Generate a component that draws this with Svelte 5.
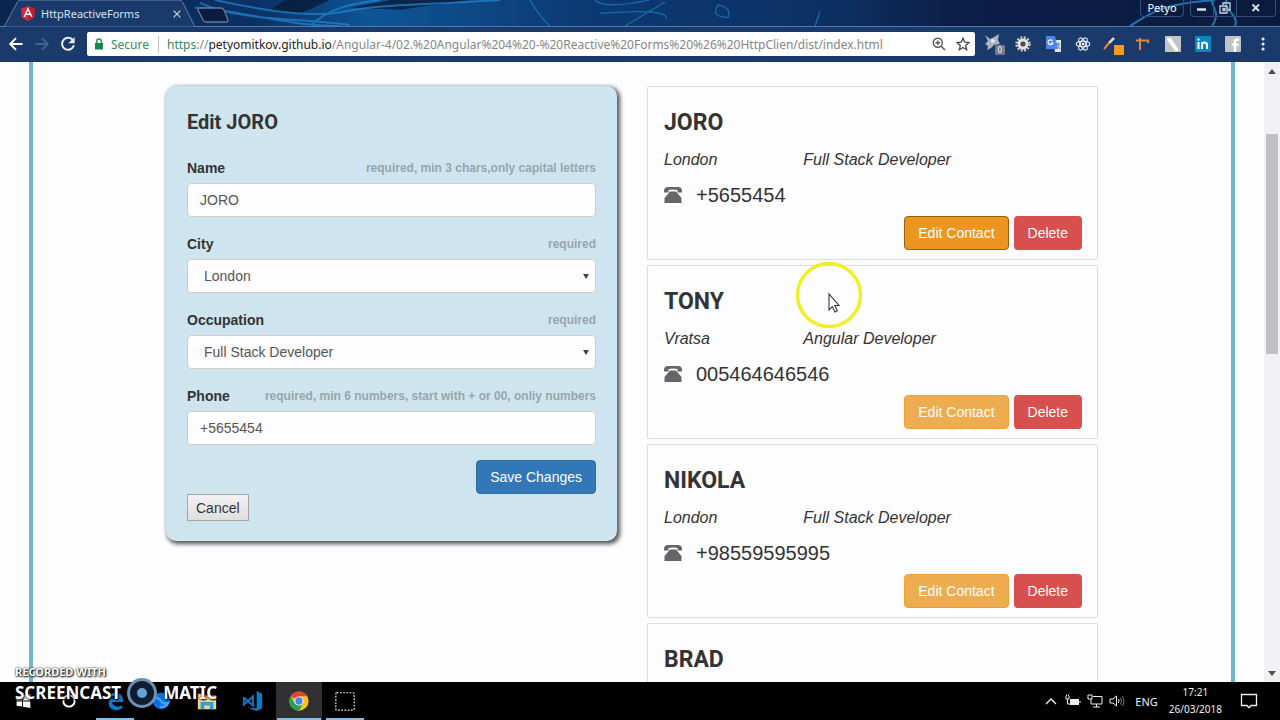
<script>
    const cities = ['London', 'Vratsa', 'Sofia'];
    const occupations = ['Full Stack Developer', 'Angular Developer'];

    let contacts = $state([
        { name: 'JORO', city: 'London', occupation: 'Full Stack Developer', phone: '+5655454' },
        { name: 'TONY', city: 'Vratsa', occupation: 'Angular Developer', phone: '005464646546' },
        { name: 'NIKOLA', city: 'London', occupation: 'Full Stack Developer', phone: '+98559595995' },
        { name: 'BRAD', city: 'London', occupation: 'Angular Developer', phone: '+4455667788' }
    ]);

    let editing = $state(0);
    let form = $state({ name: 'JORO', city: 'London', occupation: 'Full Stack Developer', phone: '+5655454' });

    function editContact(index) {
        editing = index;
        form = { ...contacts[index] };
    }

    function removeContact(index) {
        contacts.splice(index, 1);
    }

    function saveChanges(event) {
        event.preventDefault();
        contacts[editing] = { ...form };
    }

    function cancel() {
        form = { ...contacts[editing] };
    }
</script>

<div class="screen">
    <header class="tab-strip">
        <svg class="wallpaper" viewBox="0 0 1280 27" preserveAspectRatio="none" aria-hidden="true">
            <defs>
                <linearGradient id="sky" x1="0" x2="1" y1="0" y2="0">
                    <stop offset="0" stop-color="#0a2550" />
                    <stop offset="0.2" stop-color="#0b3164" />
                    <stop offset="0.29" stop-color="#0e5596" />
                    <stop offset="0.45" stop-color="#0c3a73" />
                    <stop offset="0.65" stop-color="#0d3063" />
                    <stop offset="0.74" stop-color="#0c1f4a" />
                    <stop offset="1" stop-color="#0b1b3d" />
                </linearGradient>
            </defs>
            <rect width="1280" height="27" fill="url(#sky)" />
            <path d="M285 0L330 0L300 14L270 11Z M390 0H470L400 10L350 8Z" fill="#07152f" opacity="0.7" />
            <path d="M195 8C240 10 290 28 340 27M215 0C250 8 310 20 345 12S430 5 500 0M200 3C240 22 290 18 350 26M310 27C330 8 350 4 380 0" fill="none" stroke="#2388cf" stroke-width="2" opacity="0.7" />
            <path d="M530 0Q540 18 550 27M595 0Q605 10 650 0M625 27L665 2M600 14Q670 8 666 20M718 5Q710 18 728 18Q732 8 718 5M815 27L820 12" fill="none" stroke="#1979bd" stroke-width="1.3" opacity="0.8" />
            <path d="M1130 27C1150 14 1160 4 1215 0M1212 27C1222 12 1210 6 1212 0M1235 27C1240 15 1220 8 1227 0" fill="none" stroke="#1f86c6" stroke-width="2" opacity="0.85" />
        </svg>

        <div class="tab">
            <svg class="tab-shape" viewBox="0 0 200 27" preserveAspectRatio="none" aria-hidden="true">
                <path d="M0 27L14 2Q15 0 18 0H182Q185 0 186 2L199 27Z" fill="#1a3a6c" stroke="#6483ac" />
            </svg>
            <svg class="angular" viewBox="0 0 14 15" aria-hidden="true">
                <path d="M7 0L14 2.4L13 11.4L7 15L1 11.4L0 2.4Z" fill="#d9283a" />
                <path d="M7 0L14 2.4L13 11.4L7 15Z" fill="#b81f31" />
                <path d="M3.2 11L7 2.7L10.8 11M4.8 8.3H9.2" fill="none" stroke="#fff" stroke-width="1.5" />
            </svg>
            <span class="tab-title">HttpReactiveForms</span>
            <button class="tab-close" aria-label="Close tab">
                <svg viewBox="0 0 8 8"><path d="M.7 .7L7.3 7.3M7.3 .7L.7 7.3" stroke="#c7d3e6" stroke-width="1.2" /></svg>
            </button>
        </div>
        <button class="new-tab" aria-label="New tab">
            <svg viewBox="0 0 34 17"><path d="M4 1H25Q27 1 28 3L32 13Q32 15 30 15H10Q8 15 7 13L2 3Q2 1 4 1Z" fill="#0c1c3e" stroke="#5d7ba4" stroke-width="1.3" /></svg>
        </button>

        <button class="profile">Petyo</button>
        <div class="window-buttons">
            <button aria-label="Minimize"><svg viewBox="0 0 12 12"><path d="M1 7.5H10" stroke="#d8e1ee" stroke-width="2.5" /></svg></button>
            <button aria-label="Restore"><svg viewBox="0 0 12 12"><path d="M4 3V1H11V8H9M1 4H8V11H1ZM4 6.5H6V8.5H4Z" fill="none" stroke="#c9d4e6" stroke-width="1.3" /></svg></button>
            <button class="wide" aria-label="Close"><svg viewBox="0 0 12 12"><path d="M2.5 2.5L9 9M9 2.5L2.5 9" stroke="#d8e1ee" stroke-width="1.8" /></svg></button>
        </div>
    </header>

    <nav class="toolbar">
        <div class="nav-buttons">
            <button aria-label="Back"><svg viewBox="0 0 16 16"><path d="M14.5 8H2.5M8 2.2L2.2 8L8 13.8" fill="none" stroke="#fff" stroke-width="1.9" /></svg></button>
            <button aria-label="Forward"><svg viewBox="0 0 16 16"><path d="M1.5 8H13.5M8 2.2L13.8 8L8 13.8" fill="none" stroke="#426092" stroke-width="1.8" /></svg></button>
            <button aria-label="Reload"><svg viewBox="0 0 16 16"><path d="M13 4.4A6 6 0 1 0 13.9 9.2" fill="none" stroke="#e4ecfa" stroke-width="2" /><path d="M14.6 1V7.2H8.4Z" fill="#e4ecfa" /></svg></button>
        </div>
        <div class="address">
            <svg class="lock" viewBox="0 0 8 12" aria-hidden="true"><path d="M0 5H8V11.5H0Z" fill="#12854a" /><path d="M1.8 5V3A2.2 2.2 0 0 1 6.2 3V5" fill="none" stroke="#12854a" stroke-width="1.3" /></svg>
            <span class="secure">Secure</span>
            <span class="url"><span class="scheme">https<i>://</i></span><b>petyomitkov.github.io</b>/Angular-4/02.%20Angular%204%20-%20Reactive%20Forms%20%26%20HttpClien/dist/index.html</span>
            <button aria-label="Zoom"><svg viewBox="0 0 14 14"><circle cx="5.8" cy="5.8" r="4.5" fill="none" stroke="#555" stroke-width="1.4" /><path d="M9.2 9.2L13 13M3.5 5.8H8.1M5.8 3.5V8.1" stroke="#555" stroke-width="1.4" /></svg></button>
            <button aria-label="Bookmark this page"><svg viewBox="0 0 14 14"><path d="M7 1.2L8.7 5.2L13 5.6L9.7 8.4L10.7 12.7L7 10.4L3.3 12.7L4.3 8.4L1 5.6L5.3 5.2Z" fill="none" stroke="#444" stroke-width="1.3" /></svg></button>
        </div>
        <div class="extensions">
            <button aria-label="Pinned extension"><svg viewBox="0 0 24 24"><path d="M4 3L9 7L13 5L18 2L17 8L19 12L13 13L10 16L6 18L7 14L4 12L7 9Z" fill="#aab3bf" /><circle cx="12" cy="9" r="2" fill="#e6ebf2" /><rect x="14" y="13" width="10" height="10" rx="1.5" fill="#727b8d" /></svg><em>0</em></button>
            <button aria-label="Settings extension"><svg viewBox="0 0 24 24"><circle cx="12" cy="12" r="6.5" fill="none" stroke="#c9c9c5" stroke-width="2.5" stroke-dasharray="2 1.4" /><circle cx="12" cy="12" r="4" fill="none" stroke="#e3e3df" stroke-width="3" /><circle cx="12" cy="12" r="2" fill="#4b4e52" /></svg></button>
            <button aria-label="Translate"><svg viewBox="0 0 24 24"><path d="M12 8H20V20H14Z" fill="#dfe4ea" /><path d="M5 4H14L17 17H5Z" fill="#4a86ec" /><path d="M11.4 8.8A2.4 2.4 0 1 0 11.8 11H9.6" fill="none" stroke="#fff" stroke-width="1.2" /><path d="M15 12H19M17 11V12Q17 15 19 17" fill="none" stroke="#607d9c" /></svg></button>
            <button aria-label="React tools"><svg viewBox="0 0 24 24"><g fill="none" stroke="#e6edf7" stroke-width="1.1"><ellipse cx="12" cy="12" rx="6.8" ry="2.7" /><ellipse cx="12" cy="12" rx="6.8" ry="2.7" transform="rotate(60 12 12)" /><ellipse cx="12" cy="12" rx="6.8" ry="2.7" transform="rotate(120 12 12)" /></g><circle cx="12" cy="12" r="1.3" fill="#fff" /></svg></button>
            <button aria-label="Color picker"><svg viewBox="0 0 24 24"><path d="M3 17L8 11" stroke="#db8b35" stroke-width="2" /><path d="M8 11L13 6" stroke="#e2d5c5" stroke-width="2.5" /><rect x="13" y="13" width="10" height="10" fill="#f59b19" /><path d="M17 18H19" stroke="#ffc464" /></svg></button>
            <button aria-label="Page ruler"><svg viewBox="0 0 24 24"><path d="M5 8.5H18M9 6V18M17 8V11" fill="none" stroke="#e28346" stroke-width="2" /></svg></button>
            <button aria-label="Notes"><svg viewBox="0 0 24 24"><rect x="4" y="4" width="16" height="16" fill="#bfc4c4" /><path d="M6 6H10L17 17V19H14L6 8Z" fill="#fff" /></svg></button>
            <button aria-label="LinkedIn"><svg viewBox="0 0 24 24"><rect x="4" y="4" width="16" height="16" rx="1" fill="#0c86c0" /><path d="M7.5 10V17M7.5 6.5V8.5M11 17V10M11 13Q11 10.5 13.5 10.5T16 13V17" fill="none" stroke="#fff" stroke-width="2" /></svg></button>
            <button aria-label="Facebook"><svg viewBox="0 0 24 24"><rect x="4" y="4" width="16" height="16" rx="1" fill="#bfc4c8" /><path d="M14 20V9.5Q14 7.5 16 7.5H18M11 12.5H17.5" fill="none" stroke="#fff" stroke-width="2.4" /></svg></button>
            <button aria-label="Menu"><svg viewBox="0 0 24 24"><path d="M12 7h.1M12 12h.1M12 17h.1" stroke="#e8eef8" stroke-width="3" stroke-linecap="round" /></svg></button>
        </div>
    </nav>

    <div class="viewport">
        <div class="scroll-area">
            <main class="frame">
                <div class="container">
                    <form class="editor" onsubmit={saveChanges}>
                        <h2>Edit {contacts[editing]?.name}</h2>

                        <div class="group">
                            <div class="label-row">
                                <label for="name">Name</label>
                                <small>required, min 3 chars,only capital letters</small>
                            </div>
                            <input id="name" type="text" bind:value={form.name} />
                        </div>

                        <div class="group">
                            <div class="label-row">
                                <label for="city">City</label>
                                <small>required</small>
                            </div>
                            <div class="select">
                                <select id="city" bind:value={form.city}>
                                    {#each cities as city}
                                        <option value={city}>{city}</option>
                                    {/each}
                                </select>
                            </div>
                        </div>

                        <div class="group">
                            <div class="label-row">
                                <label for="occupation">Occupation</label>
                                <small>required</small>
                            </div>
                            <div class="select">
                                <select id="occupation" bind:value={form.occupation}>
                                    {#each occupations as occupation}
                                        <option value={occupation}>{occupation}</option>
                                    {/each}
                                </select>
                            </div>
                        </div>

                        <div class="group">
                            <div class="label-row">
                                <label for="phone">Phone</label>
                                <small>required, min 6 numbers, start with + or 00, onliy numbers</small>
                            </div>
                            <input id="phone" type="text" bind:value={form.phone} />
                        </div>

                        <button class="btn primary" type="submit">Save Changes</button>
                        <button class="cancel" type="button" onclick={cancel}>Cancel</button>
                    </form>

                    <div class="contacts">
                        {#each contacts as contact, i}
                            <article class="card">
                                <h3>{contact.name}</h3>
                                <p class="details">
                                    <span>{contact.city}</span>
                                    <span>{contact.occupation}</span>
                                </p>
                                <p class="phone">
                                    <svg viewBox="0 0 18 16" aria-hidden="true">
                                        <path d="M0 5.5V3.8Q0 0 4 0H14Q18 0 18 3.8V5.5H13.5V3Q9 1.8 4.5 3V5.5Z" fill="#666" />
                                        <path d="M6 4.5H12L17.5 11V16H.5V11Z" fill="#666" />
                                    </svg>
                                    {contact.phone}
                                </p>
                                <div class="actions">
                                    <button class="btn warning" class:active={i === editing} onclick={() => editContact(i)}>Edit Contact</button>
                                    <button class="btn danger" onclick={() => removeContact(i)}>Delete</button>
                                </div>
                            </article>
                        {/each}
                    </div>
                </div>
            </main>
        </div>

        <div class="scrollbar" aria-hidden="true">
            <svg viewBox="0 0 8 5"><path d="M4 0L8 5H0Z" fill="#505050" /></svg>
            <div class="track"><div class="thumb"></div></div>
            <svg viewBox="0 0 8 5"><path d="M0 0H8L4 5Z" fill="#505050" /></svg>
        </div>

        <!-- Mouse pointer with its highlight ring -->
        <div class="pointer" aria-hidden="true">
            <svg viewBox="0 0 68 68">
                <circle cx="34" cy="34" r="31.5" fill="none" stroke="#f0f028" stroke-width="3.5" />
                <path d="M34 33V49L37.4 45.6L40 51L42.3 49.8L39.8 44.5H44Z" fill="#fff" stroke="#333" stroke-width="1.1" />
            </svg>
        </div>
    </div>

    <footer class="taskbar">
        <div class="apps">
            <button aria-label="Start"><svg viewBox="0 0 24 24"><path d="M5 7L11 6V11.5H5ZM12 5.8L20 4.5V11.5H12ZM5 12.5H11V18L5 17.2ZM12 12.5H20V19.5L12 18.3Z" fill="#fff" /></svg></button>
            <button aria-label="Cortana"><svg viewBox="0 0 24 24"><circle cx="12" cy="12" r="6.2" fill="none" stroke="#fff" stroke-width="2" /></svg></button>
            <button class="open" aria-label="Edge"><svg viewBox="0 0 24 24"><path d="M3 11C4 6 8 3 12 3C18 3 21 7 21 13H9C9 16 12 18 15 18C17 18 18.5 17.5 20 16.5V20C18 21 16 22 13.5 22C8 22 5 18.5 5 14C5 11 7 9 10 7.5C9.2 8.5 9 9.3 9 10H15.5C15.5 8 14.5 6.5 12 6.5C8.5 6.5 5 8 3 11Z" fill="#0c78d4" /></svg></button>
            <button aria-label="Firefox"><svg viewBox="0 0 24 24"><circle cx="12" cy="12" r="9" fill="#0b6fe0" /><path d="M3 8Q10 8 12 12T20 14Q17 20 11 18" fill="none" stroke="#43a4ff" stroke-width="2.5" /></svg></button>
            <button aria-label="File Explorer"><svg viewBox="0 0 24 24"><path d="M2 4H9L11 6H22V21H2Z" fill="#f6d67a" /><path d="M5 13H19V21H15V17H9V21H5Z" fill="#2ea0dc" /></svg></button>
            <button aria-label="Visual Studio Code"><svg viewBox="0 0 24 24"><path d="M16 1L22 4V20L16 23L6 19L16 20Z" fill="#0b7bd0" /><path d="M2 8V16L12 7V17L2 8" fill="none" stroke="#0b7bd0" stroke-width="2" /></svg></button>
            <button class="open current" aria-label="Chrome"><svg viewBox="0 0 24 24"><circle cx="12" cy="12" r="10.5" fill="#f7c51d" /><path d="M12 12L2.9 6.8A10.5 10.5 0 0 1 21.1 6.8H12Z" fill="#df4434" /><path d="M2.9 6.8A10.5 10.5 0 0 0 12 22.5L16.5 14.6L7.5 14.6Z" fill="#24a057" /><circle cx="12" cy="12" r="5" fill="#fff" /><circle cx="12" cy="12" r="4" fill="#4d83ed" /></svg></button>
            <button class="open" aria-label="Screen recorder"><svg viewBox="0 0 24 24"><rect x="2" y="3" width="20" height="19" rx="1" fill="none" stroke="#e8e8e8" stroke-width="1.3" stroke-dasharray="2 1.5" /></svg></button>
        </div>

        <div class="tray">
            <svg viewBox="0 0 16 16" aria-hidden="true"><path d="M3 11L8 6L13 11" fill="none" stroke="#eee" stroke-width="1.4" /></svg>
            <svg viewBox="0 0 16 16" aria-hidden="true"><path d="M5 6H14V12H5Z" fill="#eee" /><path d="M15 8V10M1 3V6H4V3M2.5 6V11H5M1.5 1.5V3M3.5 1.5V3" fill="none" stroke="#eee" /></svg>
            <svg viewBox="0 0 16 16" aria-hidden="true"><path d="M6 3.5H15V11H4V6M6 14H13M9.5 11V14M1 2H5V6H1Z" fill="none" stroke="#eee" /></svg>
            <svg viewBox="0 0 16 16" aria-hidden="true"><path d="M1 6H4L7.5 3V13L4 10H1Z" fill="none" stroke="#eee" /><path d="M9.5 6Q10.5 8 9.5 10" fill="none" stroke="#eee" /><path d="M11.5 4.5Q13.5 8 11.5 11.5M13.5 3Q16.5 8 13.5 13" fill="none" stroke="#777" /></svg>
            <span class="lang">ENG</span>
            <time>17:21<br />26/03/2018</time>
            <svg class="notify" viewBox="0 0 18 18" aria-hidden="true"><path d="M1.5 2.5H16.5V13.5H11L9 15.8L7 13.5H1.5Z" fill="none" stroke="#eee" stroke-width="1.3" /></svg>
        </div>
    </footer>

    <div class="watermark">
        <span class="small">RECORDED WITH</span>
        <div class="brand">
            <span>SCREENCAST</span>
            <svg viewBox="0 0 32 32" aria-hidden="true"><circle cx="16" cy="16" r="13.5" fill="#101c30" stroke="#6b91b5" stroke-width="3" /><circle cx="16" cy="16" r="5" fill="#66a3dd" /></svg>
            <span>MATIC</span>
        </div>
    </div>
</div>

<style>
    :global(body) {
        margin: 0;
    }

    .screen {
        position: relative;
        display: flex;
        flex-direction: column;
        height: 100vh;
        overflow: hidden;
        background: #fdfcfe;
        color: #333;
        font-family: "Liberation Sans", Arial, sans-serif;
        font-size: 14px;
    }

    .screen * {
        box-sizing: border-box;
    }

    button {
        padding: 0;
        border: 0;
        background: none;
        color: inherit;
        font: inherit;
        cursor: pointer;
    }

    svg {
        display: block;
        flex-shrink: 0;
    }

    /* Browser tab strip */
    .tab-strip {
        position: relative;
        display: flex;
        flex-shrink: 0;
        align-items: flex-start;
        height: 27px;
        padding: 0 4px;
        border-bottom: 1px solid #5579a6;
        font-family: "Noto Sans", "Open Sans", sans-serif;
    }

    .wallpaper,
    .tab-shape {
        position: absolute;
        inset: 0;
        width: 100%;
        height: 100%;
    }

    .tab {
        position: relative;
        display: flex;
        align-items: center;
        width: 192px;
        height: 27px;
        padding: 0 15px 0 17px;
        color: #d9e2ef;
        font-size: 11px;
    }

    .angular {
        position: relative;
        width: 14px;
        height: 15px;
    }

    .tab-title {
        position: relative;
        flex: 1;
        margin-left: 6px;
    }

    .tab-close {
        position: relative;
    }

    .tab-close svg {
        width: 8px;
        height: 8px;
    }

    .new-tab {
        position: relative;
        padding-top: 7px;
    }

    .new-tab svg {
        width: 34px;
        height: 17px;
    }

    .profile {
        position: relative;
        width: 44px;
        height: 17px;
        margin: 0 6px 0 auto;
        border: 1px solid #344d78;
        border-top: 0;
        border-radius: 0 0 4px 4px;
        color: #fff;
        font-size: 11px;
        line-height: 16px;
    }

    .window-buttons {
        position: relative;
        display: flex;
        height: 17px;
        border: 1px solid #344d78;
        border-top: 0;
        border-radius: 0 0 4px 4px;
    }

    .window-buttons button {
        display: grid;
        place-items: center;
        width: 23px;
        border-right: 1px solid #344d78;
    }

    .window-buttons .wide {
        width: 38px;
        border-right: 0;
    }

    .window-buttons svg {
        width: 12px;
        height: 12px;
    }

    /* Address bar */
    .toolbar {
        display: flex;
        flex-shrink: 0;
        align-items: center;
        height: 35px;
        padding: 0 5px 1px 8px;
        background: #1a3a6c;
        font-family: "Noto Sans", "Open Sans", sans-serif;
    }

    .nav-buttons {
        display: flex;
        gap: 10px;
        padding-right: 11px;
    }

    .nav-buttons svg {
        width: 16px;
        height: 16px;
    }

    .address {
        display: flex;
        flex: 1;
        align-items: center;
        min-width: 0;
        height: 24px;
        padding: 0 5px 0 8px;
        border-radius: 2px;
        background: #fff;
        color: #868686;
        font-size: 12px;
        white-space: nowrap;
    }

    .lock {
        width: 8px;
        height: 12px;
    }

    .secure {
        margin: 0 8px;
        padding-right: 9px;
        border-right: 1px solid #c4c4c4;
        color: #35895c;
    }

    .url {
        flex: 1;
        overflow: hidden;
    }

    .url b {
        color: #222;
        font-weight: 400;
    }

    .scheme {
        color: #35895c;
    }

    .scheme i {
        color: #868686;
        font-style: normal;
    }

    .address button {
        margin-left: 10px;
    }

    .address button svg {
        width: 14px;
        height: 14px;
    }

    .extensions {
        display: flex;
        gap: 6px;
        padding-left: 6px;
    }

    .extensions button {
        position: relative;
    }

    .extensions svg {
        width: 24px;
        height: 24px;
    }

    .extensions em {
        position: absolute;
        right: 3px;
        bottom: 0;
        color: #fff;
        font-size: 8px;
        font-style: normal;
        line-height: 12px;
    }

    /* Page */
    .viewport {
        position: relative;
        display: flex;
        flex: 1;
        min-height: 0;
    }

    .scroll-area {
        flex: 1;
        overflow-y: auto;
        padding: 0 29px;
        scrollbar-width: none;
    }

    .frame {
        padding: 24px 16px;
        border: 4px solid #71b4cd;
        border-width: 0 4px;
    }

    .container {
        display: grid;
        grid-template-columns: 1fr 1fr;
        gap: 30px;
        align-items: start;
        max-width: 932px;
        margin: 0 auto;
    }

    .editor {
        display: flex;
        flex-direction: column;
        padding: 20px 21px;
        border-radius: 10px;
        background: #cee5ef;
        box-shadow: 2px 2px 4px 1px #555;
    }

    h2,
    h3 {
        margin: 0;
        font-family: Roboto, "Liberation Sans", sans-serif;
        font-weight: 700;
    }

    h2 {
        margin-bottom: 18px;
        font-size: 20px;
        line-height: 32px;
    }

    .group {
        margin-bottom: 15px;
    }

    .label-row {
        display: flex;
        justify-content: space-between;
        height: 27px;
        line-height: 24px;
        font-weight: 700;
    }

    .label-row small {
        color: #97a5ad;
        font-size: 12px;
        line-height: 24px;
    }

    input,
    select {
        display: block;
        width: 100%;
        height: 34px;
        padding: 0 12px;
        border: 1px solid #ccc;
        border-radius: 4px;
        background: #fdfcfe;
        color: #555;
        font: inherit;
        appearance: none;
    }

    .select {
        position: relative;
    }

    .select select {
        padding: 0 16px;
    }

    .select::after {
        content: "";
        position: absolute;
        top: 15px;
        right: 7px;
        border: 3px solid transparent;
        border-top: 5px solid #444;
        border-bottom: 0;
        pointer-events: none;
    }

    .btn {
        height: 34px;
        padding: 0 13px;
        border: 1px solid transparent;
        border-radius: 4px;
        color: #fff;
    }

    .primary {
        align-self: flex-end;
        border-color: #2e6da4;
        background: #3277b7;
    }

    .cancel {
        align-self: flex-start;
        height: 27px;
        padding: 0 8px;
        border: 1px solid #a6a6a6;
        background: linear-gradient(#f4f2f4, #dedede);
    }

    .contacts {
        display: flex;
        flex-direction: column;
        gap: 5px;
    }

    .card {
        padding: 20px 15px 9px 16px;
        border: 1px solid #ddd;
        border-radius: 2px;
    }

    .card h3 {
        margin-bottom: 8px;
        font-size: 23px;
        line-height: 32px;
    }

    .card p {
        margin: 0;
    }

    .details {
        display: grid;
        grid-template-columns: 1fr 2fr;
        font-size: 16px;
        font-style: italic;
        line-height: 26px;
    }

    .card .phone {
        display: flex;
        gap: 14px;
        align-items: center;
        margin-bottom: 1px;
        height: 42px;
        padding-top: 2px;
        font-size: 20px;
    }

    .phone svg {
        width: 18px;
        height: 16px;
    }

    .actions {
        display: flex;
        gap: 5px;
        justify-content: flex-end;
    }

    .warning {
        border-color: #eea236;
        background: #eeac50;
    }

    .warning.active {
        border-color: #985f0d;
        background: #ec9520;
    }

    .danger {
        background: #d8504d;
    }

    .scrollbar {
        display: flex;
        flex-direction: column;
        align-items: center;
        width: 16px;
        padding: 7px 1px 6px;
        background: #f1f0f2;
    }

    .scrollbar svg {
        width: 8px;
        height: 5px;
    }

    .track {
        flex: 1;
        width: 12px;
        padding-top: 60px;
    }

    .thumb {
        height: 41%;
        background: #c1c0c2;
    }

    .pointer {
        position: absolute;
        top: 199px;
        left: 795px;
    }

    .pointer svg {
        width: 68px;
        height: 68px;
    }

    /* Taskbar */
    .taskbar {
        display: flex;
        flex-shrink: 0;
        justify-content: space-between;
        height: 38px;
        background: #000;
        color: #eee;
        font-family: "Noto Sans", "Open Sans", sans-serif;
    }

    .apps {
        display: flex;
    }

    .apps button {
        display: grid;
        place-items: center;
        width: 46px;
    }

    .apps svg {
        width: 22px;
        height: 22px;
    }

    .apps .open {
        background: linear-gradient(#86bce6, #86bce6) center bottom / 38px 2px no-repeat;
    }

    .apps .current {
        background-color: #313133;
        background-size: 44px 2px;
    }

    .tray {
        display: flex;
        gap: 6px;
        align-items: center;
        padding-right: 3px;
    }

    .tray svg {
        width: 16px;
        height: 16px;
    }

    .tray .notify {
        width: 18px;
        height: 18px;
        margin: 0 19px 0 12px;
    }

    .lang {
        margin-left: 4px;
        font-size: 11px;
    }

    time {
        margin-left: 5px;
        font-size: 10px;
        line-height: 17px;
        text-align: center;
    }

    .watermark {
        position: absolute;
        bottom: 11px;
        left: 15px;
        color: #fff;
        font-family: "Noto Sans", sans-serif;
        font-weight: 700;
        text-shadow: 0 0 2px #000, 1px 1px 2px #000;
        pointer-events: none;
    }

    .small {
        display: block;
        font-size: 11px;
        line-height: 11px;
    }

    .brand {
        display: flex;
        gap: 5px;
        align-items: center;
        font-size: 17px;
        line-height: 32px;
    }

    .brand svg {
        width: 32px;
        height: 32px;
    }
</style>
